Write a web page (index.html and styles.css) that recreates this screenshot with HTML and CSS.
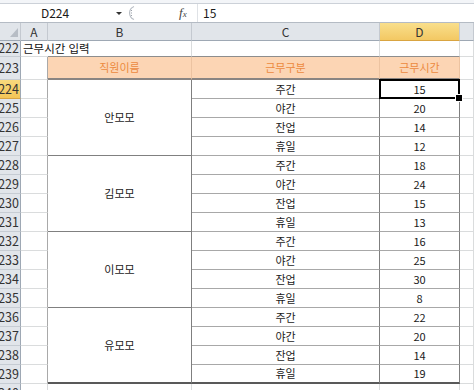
FILE: index.html
```html
<!DOCTYPE html>
<html lang="ko">

<head>
    <meta charset="UTF-8">
    <meta name="viewport" content="width=device-width, initial-scale=1.0">
    <title>근무시간 입력</title>
    <link rel="stylesheet" href="styles.css">
</head>

<body>
    <div class="app">
        <div class="ribbon-edge"></div>
        <div class="formula-bar">
            <div class="name-box">D224</div>
            <div class="name-arrow"></div>
            <div class="grip">
                <svg width="14" height="16" viewBox="0 0 14 16">
                    <path d="M9 1.5 A7 7 0 0 0 9 14.5" fill="none" stroke="#b9bec5" stroke-width="1.2"/>
                    <rect x="6" y="5" width="1" height="1" fill="#9aa0a8"/>
                    <rect x="6" y="7.5" width="1" height="1" fill="#9aa0a8"/>
                    <rect x="6" y="10" width="1" height="1" fill="#9aa0a8"/>
                </svg>
            </div>
            <div class="fx"><i>f</i><span>x</span></div>
            <div class="formula">15</div>
        </div>

        <div class="sheet">
            <!-- column headers -->
            <div class="cell corner">
                <svg width="8" height="9" viewBox="0 0 8 9"><polygon points="8,0 8,9 0,9" fill="#b7bdc5"/></svg>
            </div>
            <div class="cell col-head">A</div>
            <div class="cell col-head">B</div>
            <div class="cell col-head">C</div>
            <div class="cell col-head active">D</div>
            <div class="cell col-head"></div>

            <!-- 222 -->
            <div class="cell row-head">222</div>
            <div class="cell title">근무시간 입력</div>
            <div class="cell top-edge"></div>
            <div class="cell top-edge"></div>
            <div class="cell top-edge"></div>
            <div class="cell"></div>

            <!-- 223 -->
            <div class="cell row-head">223</div>
            <div class="cell edge-a"></div>
            <div class="cell th">직원이름</div>
            <div class="cell th">근무구분</div>
            <div class="cell th">근무시간</div>
            <div class="cell"></div>

            <!-- 안모모 -->
            <div class="cell row-head active">224</div>
            <div class="cell edge-a"></div>
            <div class="cell name">안모모</div>
            <div class="cell kind">주간</div>
            <div class="cell hours selected">15</div>
            <div class="cell"></div>

            <div class="cell row-head">225</div>
            <div class="cell edge-a"></div>
            <div class="cell kind">야간</div>
            <div class="cell hours">20</div>
            <div class="cell"></div>

            <div class="cell row-head">226</div>
            <div class="cell edge-a"></div>
            <div class="cell kind">잔업</div>
            <div class="cell hours">14</div>
            <div class="cell"></div>

            <div class="cell row-head">227</div>
            <div class="cell edge-a"></div>
            <div class="cell kind">휴일</div>
            <div class="cell hours">12</div>
            <div class="cell"></div>

            <!-- 김모모 -->
            <div class="cell row-head">228</div>
            <div class="cell edge-a"></div>
            <div class="cell name">김모모</div>
            <div class="cell kind">주간</div>
            <div class="cell hours">18</div>
            <div class="cell"></div>

            <div class="cell row-head">229</div>
            <div class="cell edge-a"></div>
            <div class="cell kind">야간</div>
            <div class="cell hours">24</div>
            <div class="cell"></div>

            <div class="cell row-head">230</div>
            <div class="cell edge-a"></div>
            <div class="cell kind">잔업</div>
            <div class="cell hours">15</div>
            <div class="cell"></div>

            <div class="cell row-head">231</div>
            <div class="cell edge-a"></div>
            <div class="cell kind">휴일</div>
            <div class="cell hours">13</div>
            <div class="cell"></div>

            <!-- 이모모 -->
            <div class="cell row-head">232</div>
            <div class="cell edge-a"></div>
            <div class="cell name">이모모</div>
            <div class="cell kind">주간</div>
            <div class="cell hours">16</div>
            <div class="cell"></div>

            <div class="cell row-head">233</div>
            <div class="cell edge-a"></div>
            <div class="cell kind">야간</div>
            <div class="cell hours">25</div>
            <div class="cell"></div>

            <div class="cell row-head">234</div>
            <div class="cell edge-a"></div>
            <div class="cell kind">잔업</div>
            <div class="cell hours">30</div>
            <div class="cell"></div>

            <div class="cell row-head">235</div>
            <div class="cell edge-a"></div>
            <div class="cell kind">휴일</div>
            <div class="cell hours">8</div>
            <div class="cell"></div>

            <!-- 유모모 -->
            <div class="cell row-head">236</div>
            <div class="cell edge-a"></div>
            <div class="cell name last">유모모</div>
            <div class="cell kind">주간</div>
            <div class="cell hours">22</div>
            <div class="cell"></div>

            <div class="cell row-head">237</div>
            <div class="cell edge-a"></div>
            <div class="cell kind">야간</div>
            <div class="cell hours">20</div>
            <div class="cell"></div>

            <div class="cell row-head">238</div>
            <div class="cell edge-a"></div>
            <div class="cell kind">잔업</div>
            <div class="cell hours">14</div>
            <div class="cell"></div>

            <div class="cell row-head">239</div>
            <div class="cell edge-a"></div>
            <div class="cell kind last">휴일</div>
            <div class="cell hours last">19</div>
            <div class="cell"></div>

            <div class="cell row-head">240</div>
            <div class="cell"></div>
            <div class="cell"></div>
            <div class="cell"></div>
            <div class="cell"></div>
            <div class="cell"></div>
        </div>
    </div>
</body>

</html>
```

FILE: styles.css
```css
* {
    box-sizing: border-box;
}

body {
    margin: 0;
    background-color: #fff;
    font-family: "Noto Sans CJK KR", "Noto Sans", sans-serif;
    color: #1a1a1a;
}

.app {
    width: 474px;
    height: 390px;
    overflow: hidden;
}

/* formula bar */
.ribbon-edge {
    height: 4px;
    background-color: #f3f5f8;
    border-bottom: 1px solid #ccd1d8;
}

.formula-bar {
    display: flex;
    align-items: center;
    height: 19px;
    border-bottom: 1px solid #b4bbc4;
    font-size: 12px;
}

.name-box {
    width: 110px;
    text-align: center;
    line-height: 1;
}

.name-arrow {
    margin-left: 6px;
    width: 0;
    height: 0;
    border-left: 3px solid transparent;
    border-right: 3px solid transparent;
    border-top: 3px solid #333;
}

.grip {
    display: flex;
    margin-left: 3px;
}

.fx {
    width: 18px;
    margin-left: 40px;
    font-family: "Liberation Serif", serif;
    font-size: 13px;
    color: #444;
}

.fx span {
    font-size: 9px;
    font-style: italic;
}

.formula {
    flex: 1;
    align-self: stretch;
    display: flex;
    align-items: center;
    padding-left: 5px;
    border-left: 1px solid #dfe2e6;
    line-height: 1;
}

/* grid */
.sheet {
    display: grid;
    grid-template-columns: 21px 27px 144px 188px 80px 14px;
    grid-template-rows: 18px 16px 23px repeat(16, 19px) 19px;
}

.cell {
    display: flex;
    align-items: center;
    justify-content: center;
    border-right: 1px solid #dadcdd;
    border-bottom: 1px solid #dadcdd;
    font-size: 11px;
    line-height: 1;
    white-space: nowrap;
}

.corner {
    background-color: #e1e5ea;
    border-right-color: #c4c9d0;
    border-bottom-color: #9ea8b4;
    justify-content: flex-end;
    align-items: flex-end;
    padding: 0 2px 3px 0;
}

.col-head {
    background-color: #e1e5ea;
    border-right-color: #c4c9d0;
    border-bottom-color: #9ea8b4;
    font-size: 12px;
    color: #333;
}

.col-head.active {
    background: linear-gradient(#f9df8c, #f3c863);
    border-bottom-color: #d9a441;
}

.row-head {
    background-color: #e1e5ea;
    border-right-color: #9ea8b4;
    border-bottom-color: #c6ccd3;
    justify-content: flex-end;
    padding-right: 1px;
    font-size: 12.5px;
    color: #333;
    overflow: hidden;
}

.row-head.active {
    background: linear-gradient(#f9d97d, #f3c557);
    border-bottom-color: #d9a441;
}

.title {
    justify-content: flex-start;
    padding-left: 2px;
    border-right: none;
    font-size: 11.5px;
    color: #111;
}

.top-edge {
    border-bottom-color: #8d8d8d;
}

.edge-a {
    border-right-color: #a9a9a9;
}

.th {
    background-color: #fcd5b4;
    color: #ec8a3f;
    border-right-color: #ecc3a1;
    border-bottom: 2px solid #8a8582;
}

.name {
    grid-row: span 4;
    border-right-color: #7f7f7f;
    border-bottom-color: #808080;
}

.kind,
.hours {
    border-right-color: #7f7f7f;
    border-bottom-color: #a8a8a8;
}

.last {
    border-bottom: 2px solid #595959;
}

.selected {
    position: relative;
    z-index: 1;
}

.selected::before {
    content: "";
    position: absolute;
    left: -1px;
    top: -1px;
    right: -1px;
    bottom: -1px;
    border: 2px solid #000;
}

.selected::after {
    content: "";
    position: absolute;
    right: -4px;
    bottom: -4px;
    width: 6px;
    height: 6px;
    background-color: #000;
    border: 1px solid #fff;
}
```
